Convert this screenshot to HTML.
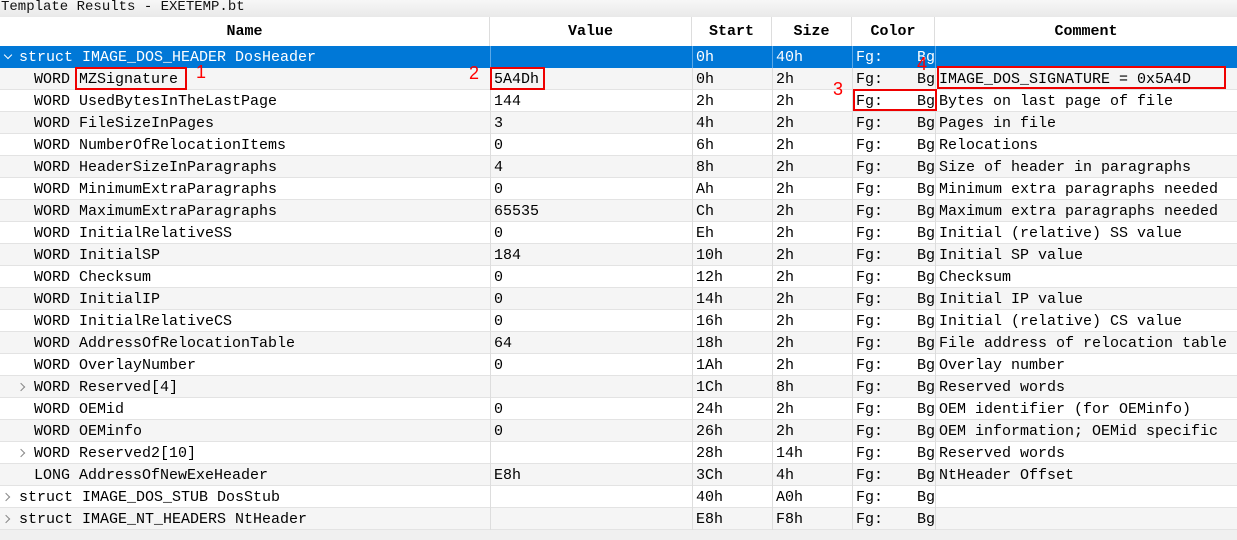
<!DOCTYPE html>
<html><head><meta charset="utf-8"><style>
*{margin:0;padding:0;box-sizing:border-box}
body{width:1237px;height:540px;overflow:hidden;background:#f0f0f0;font-family:"Liberation Mono",monospace;font-size:15px;color:#000;position:relative}
.title{position:absolute;left:0;top:0;width:1237px;height:17px;background:linear-gradient(#f7f7f7,#e9e9e9);font-size:14px;line-height:15px;padding-left:1px;color:#111}
.hdr{position:absolute;top:17px;left:0;width:1237px;height:29px;background:#fff;font-weight:bold}
.hdr div{position:absolute;top:0;height:29px;line-height:30px;text-align:center;border-right:1px solid #ddd}
.row{position:absolute;left:0;width:1237px;height:22px;border-bottom:1px solid #e3e3e3;line-height:23px;white-space:pre}
.g{background:#f5f5f5}.w{background:#fff}
.sel{background:#0078d7;color:#fff;border-bottom:1px solid #0078d7}
.c{position:absolute;top:0;height:22px;border-left:1px solid #ddd;padding-left:3px}
.sel .c{border-left:1px solid #5aa8e8}
.n{position:absolute;top:0}
.bg{position:absolute;right:0;top:0}
.chev{position:absolute;width:6px;height:6px;border-right:1.5px solid #888;border-bottom:1.5px solid #888}
.r{position:absolute;border:2px solid #e00}
.num{position:absolute;color:#f00;font-family:"Liberation Sans",sans-serif;font-size:18px}
</style></head><body>
<div class="title">Template Results - EXETEMP.bt</div>
<div class="hdr">
<div style="left:0;width:490px">Name</div>
<div style="left:490px;width:202px">Value</div>
<div style="left:692px;width:80px">Start</div>
<div style="left:772px;width:80px">Size</div>
<div style="left:852px;width:83px">Color</div>
<div style="left:935px;width:302px;border:none">Comment</div>
</div>

<div class="row sel" style="top:46px"><span class="chev" style="left:5px;top:6px;border-color:#fff;transform:rotate(45deg)"></span><span class="n" style="left:19px">struct IMAGE_DOS_HEADER DosHeader</span><span class="c" style="left:490px;width:202px"></span><span class="c" style="left:692px;width:80px">0h</span><span class="c" style="left:772px;width:80px">40h</span><span class="c" style="left:852px;width:83px">Fg:<span class="bg">Bg</span></span><span class="c" style="left:935px;width:302px"></span></div>

<div class="row g" style="top:68px"><span class="n" style="left:34px">WORD MZSignature</span><span class="c" style="left:490px;width:202px">5A4Dh</span><span class="c" style="left:692px;width:80px">0h</span><span class="c" style="left:772px;width:80px">2h</span><span class="c" style="left:852px;width:83px">Fg:<span class="bg">Bg</span></span><span class="c" style="left:935px;width:302px">IMAGE_DOS_SIGNATURE = 0x5A4D</span></div>
<div class="row w" style="top:90px"><span class="n" style="left:34px">WORD UsedBytesInTheLastPage</span><span class="c" style="left:490px;width:202px">144</span><span class="c" style="left:692px;width:80px">2h</span><span class="c" style="left:772px;width:80px">2h</span><span class="c" style="left:852px;width:83px">Fg:<span class="bg">Bg</span></span><span class="c" style="left:935px;width:302px">Bytes on last page of file</span></div>
<div class="row g" style="top:112px"><span class="n" style="left:34px">WORD FileSizeInPages</span><span class="c" style="left:490px;width:202px">3</span><span class="c" style="left:692px;width:80px">4h</span><span class="c" style="left:772px;width:80px">2h</span><span class="c" style="left:852px;width:83px">Fg:<span class="bg">Bg</span></span><span class="c" style="left:935px;width:302px">Pages in file</span></div>
<div class="row w" style="top:134px"><span class="n" style="left:34px">WORD NumberOfRelocationItems</span><span class="c" style="left:490px;width:202px">0</span><span class="c" style="left:692px;width:80px">6h</span><span class="c" style="left:772px;width:80px">2h</span><span class="c" style="left:852px;width:83px">Fg:<span class="bg">Bg</span></span><span class="c" style="left:935px;width:302px">Relocations</span></div>
<div class="row g" style="top:156px"><span class="n" style="left:34px">WORD HeaderSizeInParagraphs</span><span class="c" style="left:490px;width:202px">4</span><span class="c" style="left:692px;width:80px">8h</span><span class="c" style="left:772px;width:80px">2h</span><span class="c" style="left:852px;width:83px">Fg:<span class="bg">Bg</span></span><span class="c" style="left:935px;width:302px">Size of header in paragraphs</span></div>
<div class="row w" style="top:178px"><span class="n" style="left:34px">WORD MinimumExtraParagraphs</span><span class="c" style="left:490px;width:202px">0</span><span class="c" style="left:692px;width:80px">Ah</span><span class="c" style="left:772px;width:80px">2h</span><span class="c" style="left:852px;width:83px">Fg:<span class="bg">Bg</span></span><span class="c" style="left:935px;width:302px">Minimum extra paragraphs needed</span></div>
<div class="row g" style="top:200px"><span class="n" style="left:34px">WORD MaximumExtraParagraphs</span><span class="c" style="left:490px;width:202px">65535</span><span class="c" style="left:692px;width:80px">Ch</span><span class="c" style="left:772px;width:80px">2h</span><span class="c" style="left:852px;width:83px">Fg:<span class="bg">Bg</span></span><span class="c" style="left:935px;width:302px">Maximum extra paragraphs needed</span></div>
<div class="row w" style="top:222px"><span class="n" style="left:34px">WORD InitialRelativeSS</span><span class="c" style="left:490px;width:202px">0</span><span class="c" style="left:692px;width:80px">Eh</span><span class="c" style="left:772px;width:80px">2h</span><span class="c" style="left:852px;width:83px">Fg:<span class="bg">Bg</span></span><span class="c" style="left:935px;width:302px">Initial (relative) SS value</span></div>
<div class="row g" style="top:244px"><span class="n" style="left:34px">WORD InitialSP</span><span class="c" style="left:490px;width:202px">184</span><span class="c" style="left:692px;width:80px">10h</span><span class="c" style="left:772px;width:80px">2h</span><span class="c" style="left:852px;width:83px">Fg:<span class="bg">Bg</span></span><span class="c" style="left:935px;width:302px">Initial SP value</span></div>
<div class="row w" style="top:266px"><span class="n" style="left:34px">WORD Checksum</span><span class="c" style="left:490px;width:202px">0</span><span class="c" style="left:692px;width:80px">12h</span><span class="c" style="left:772px;width:80px">2h</span><span class="c" style="left:852px;width:83px">Fg:<span class="bg">Bg</span></span><span class="c" style="left:935px;width:302px">Checksum</span></div>
<div class="row g" style="top:288px"><span class="n" style="left:34px">WORD InitialIP</span><span class="c" style="left:490px;width:202px">0</span><span class="c" style="left:692px;width:80px">14h</span><span class="c" style="left:772px;width:80px">2h</span><span class="c" style="left:852px;width:83px">Fg:<span class="bg">Bg</span></span><span class="c" style="left:935px;width:302px">Initial IP value</span></div>
<div class="row w" style="top:310px"><span class="n" style="left:34px">WORD InitialRelativeCS</span><span class="c" style="left:490px;width:202px">0</span><span class="c" style="left:692px;width:80px">16h</span><span class="c" style="left:772px;width:80px">2h</span><span class="c" style="left:852px;width:83px">Fg:<span class="bg">Bg</span></span><span class="c" style="left:935px;width:302px">Initial (relative) CS value</span></div>
<div class="row g" style="top:332px"><span class="n" style="left:34px">WORD AddressOfRelocationTable</span><span class="c" style="left:490px;width:202px">64</span><span class="c" style="left:692px;width:80px">18h</span><span class="c" style="left:772px;width:80px">2h</span><span class="c" style="left:852px;width:83px">Fg:<span class="bg">Bg</span></span><span class="c" style="left:935px;width:302px">File address of relocation table</span></div>
<div class="row w" style="top:354px"><span class="n" style="left:34px">WORD OverlayNumber</span><span class="c" style="left:490px;width:202px">0</span><span class="c" style="left:692px;width:80px">1Ah</span><span class="c" style="left:772px;width:80px">2h</span><span class="c" style="left:852px;width:83px">Fg:<span class="bg">Bg</span></span><span class="c" style="left:935px;width:302px">Overlay number</span></div>
<div class="row g" style="top:376px"><span class="chev" style="left:18px;top:8px;transform:rotate(-45deg)"></span><span class="n" style="left:34px">WORD Reserved[4]</span><span class="c" style="left:490px;width:202px"></span><span class="c" style="left:692px;width:80px">1Ch</span><span class="c" style="left:772px;width:80px">8h</span><span class="c" style="left:852px;width:83px">Fg:<span class="bg">Bg</span></span><span class="c" style="left:935px;width:302px">Reserved words</span></div>
<div class="row w" style="top:398px"><span class="n" style="left:34px">WORD OEMid</span><span class="c" style="left:490px;width:202px">0</span><span class="c" style="left:692px;width:80px">24h</span><span class="c" style="left:772px;width:80px">2h</span><span class="c" style="left:852px;width:83px">Fg:<span class="bg">Bg</span></span><span class="c" style="left:935px;width:302px">OEM identifier (for OEMinfo)</span></div>
<div class="row g" style="top:420px"><span class="n" style="left:34px">WORD OEMinfo</span><span class="c" style="left:490px;width:202px">0</span><span class="c" style="left:692px;width:80px">26h</span><span class="c" style="left:772px;width:80px">2h</span><span class="c" style="left:852px;width:83px">Fg:<span class="bg">Bg</span></span><span class="c" style="left:935px;width:302px">OEM information; OEMid specific</span></div>
<div class="row w" style="top:442px"><span class="chev" style="left:18px;top:8px;transform:rotate(-45deg)"></span><span class="n" style="left:34px">WORD Reserved2[10]</span><span class="c" style="left:490px;width:202px"></span><span class="c" style="left:692px;width:80px">28h</span><span class="c" style="left:772px;width:80px">14h</span><span class="c" style="left:852px;width:83px">Fg:<span class="bg">Bg</span></span><span class="c" style="left:935px;width:302px">Reserved words</span></div>
<div class="row g" style="top:464px"><span class="n" style="left:34px">LONG AddressOfNewExeHeader</span><span class="c" style="left:490px;width:202px">E8h</span><span class="c" style="left:692px;width:80px">3Ch</span><span class="c" style="left:772px;width:80px">4h</span><span class="c" style="left:852px;width:83px">Fg:<span class="bg">Bg</span></span><span class="c" style="left:935px;width:302px">NtHeader Offset</span></div>
<div class="row w" style="top:486px"><span class="chev" style="left:3px;top:8px;transform:rotate(-45deg)"></span><span class="n" style="left:19px">struct IMAGE_DOS_STUB DosStub</span><span class="c" style="left:490px;width:202px"></span><span class="c" style="left:692px;width:80px">40h</span><span class="c" style="left:772px;width:80px">A0h</span><span class="c" style="left:852px;width:83px">Fg:<span class="bg">Bg</span></span><span class="c" style="left:935px;width:302px"></span></div>
<div class="row g" style="top:508px"><span class="chev" style="left:3px;top:8px;transform:rotate(-45deg)"></span><span class="n" style="left:19px">struct IMAGE_NT_HEADERS NtHeader</span><span class="c" style="left:490px;width:202px"></span><span class="c" style="left:692px;width:80px">E8h</span><span class="c" style="left:772px;width:80px">F8h</span><span class="c" style="left:852px;width:83px">Fg:<span class="bg">Bg</span></span><span class="c" style="left:935px;width:302px"></span></div>

<div class="r" style="left:75px;top:67px;width:112px;height:23px"></div>
<div class="num" style="left:196px;top:62px">1</div>
<div class="num" style="left:469px;top:63px">2</div>
<div class="r" style="left:490px;top:67px;width:55px;height:23px"></div>
<div class="num" style="left:833px;top:79px">3</div>
<div class="r" style="left:853px;top:89px;width:84px;height:22px"></div>
<div class="num" style="left:917px;top:54px">4</div>
<div class="r" style="left:937px;top:66px;width:289px;height:23px"></div>
</body></html>
